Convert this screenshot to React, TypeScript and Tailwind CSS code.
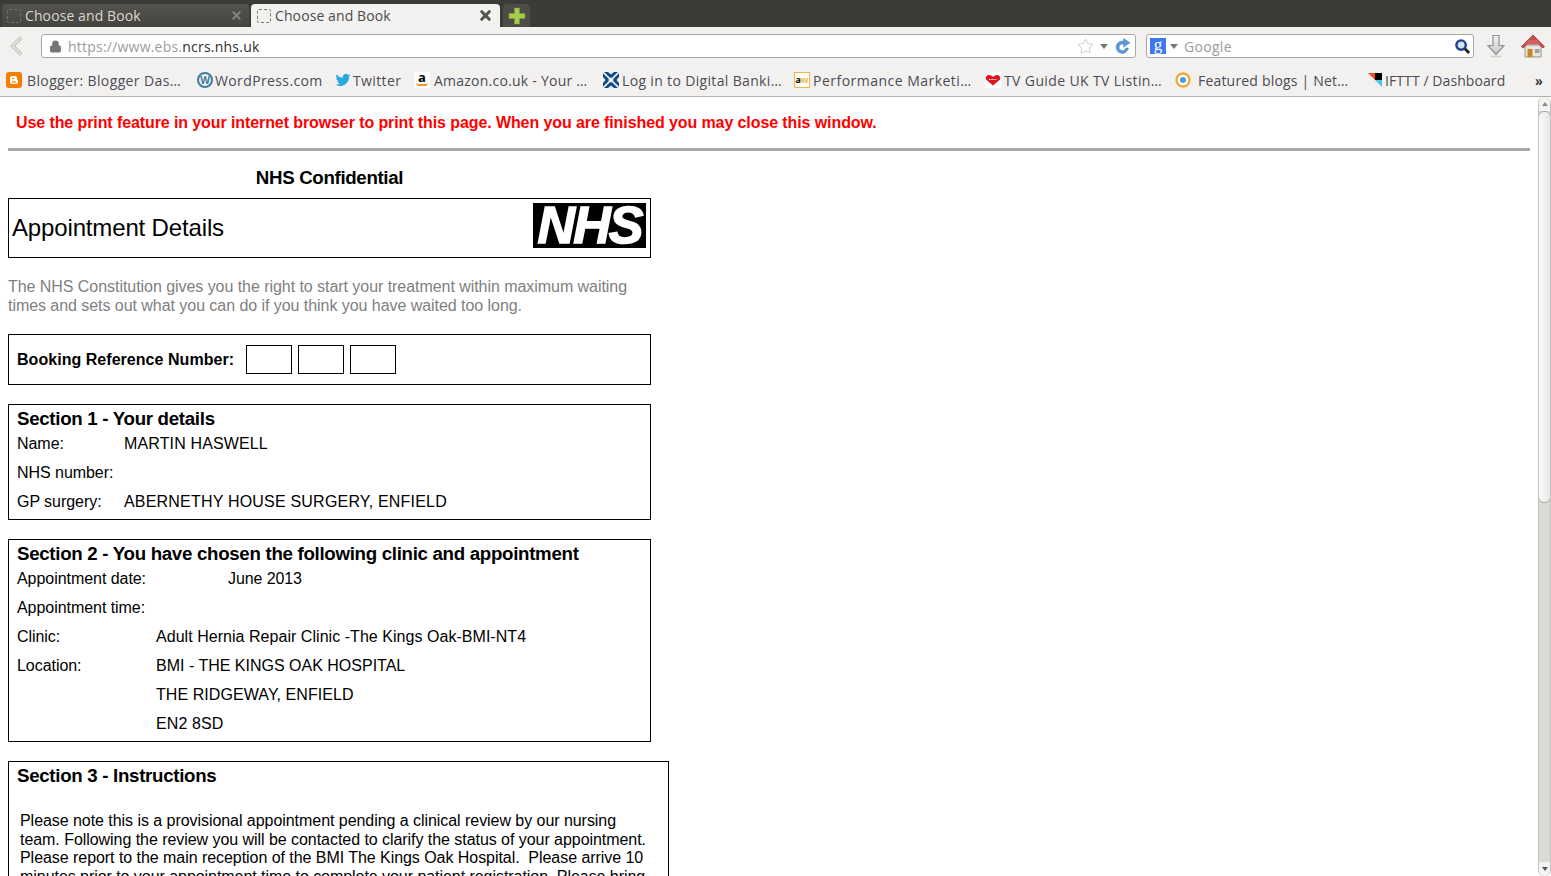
import React from 'react';
import { Lock, Star, X } from 'lucide-react';

const ui = "font-['Open_Sans',sans-serif]";

const Fav = ({ children }: { children: React.ReactNode }) => (
  <span className="w-4 h-4 shrink-0 flex items-center justify-center">{children}</span>
);

const Bookmark = ({ icon, label, w, gap, track = 'tracking-[0.38px]' }: { icon: React.ReactNode; label: string; w: number; gap: string; track?: string }) => (
  <div className="flex items-center shrink-0 overflow-hidden whitespace-nowrap" style={{ width: w }}>
    <Fav>{icon}</Fav>
    <span className={`${gap} ${track} text-[14px] text-[#4c4c54]`}>{label}</span>
  </div>
);

const Dashed = () => <span className="w-[14px] h-[14px] border border-dashed border-[#77766f] rounded-[2px] shrink-0" />;

const Row = ({ label, value, labelW, h = 'h-[29px]', track = '' }: { label: string; value?: string; labelW: string; h?: string; track?: string }) => (
  <div className={`flex items-center ${h}`}>
    <span className={`${labelW} shrink-0 tracking-[-0.05px]`}>{label}</span>
    <span className={track}>{value}</span>
  </div>
);

export default function App() {
  return (
    <div className="h-[876px] w-[1551px] overflow-hidden flex flex-col bg-white">
      {/* tab strip */}
      <div className={`${ui} h-[27px] bg-[#3c3b37] flex items-end pl-[2px] gap-[2px] shrink-0`}>
        <div className="w-[247px] h-[23px] rounded-t-[4px] bg-gradient-to-b from-[#55534e] to-[#45443f] flex items-center pl-[5px] pr-[6px] gap-[4px] text-[14px] tracking-[0.1px] text-[#d8d6d0]">
          <Dashed />
          <span className="flex-1">Choose and Book</span>
          <X className="w-[13px] h-[13px] text-[#85847e]" strokeWidth={3.5} />
        </div>
        <div className="w-[249px] h-[23px] rounded-t-[4px] bg-[#f3f2f0] flex items-center pl-[6px] pr-[7px] gap-[4px] text-[14px] tracking-[0.1px] text-[#4b4b4b]">
          <Dashed />
          <span className="flex-1">Choose and Book</span>
          <X className="w-[15px] h-[15px] text-[#55534f]" strokeWidth={5} />
        </div>
        <div className="ml-px w-[27px] h-[23px] rounded-t-[4px] bg-[#4d4c47] flex items-center justify-center">
          <svg viewBox="0 0 18 18" className="w-[18px] h-[18px]">
            <path d="M6.500 1h5v5.500H17v5h-5.500V17h-5v-5.500H1v-5h5.500z" fill="#a3cf4c" stroke="#7d9c3a" strokeWidth=".6" />
          </svg>
        </div>
      </div>

      {/* nav bar */}
      <div className={`${ui} h-[36px] pt-[2px] bg-[#f2f1f0] flex items-center shrink-0 pl-[9px]`}>
        <svg viewBox="0 0 14 22" className="w-[14px] h-[22px] shrink-0">
          <path d="M11 1.500 13 4 6 11l7 7-2 2.500L1.500 11z" fill="#dcdbd8" stroke="#c4c3c0" strokeWidth="1" />
        </svg>
        <div className="ml-[18px] w-[1095px] h-[24px] bg-white border border-[#a9a8a5] rounded-[3px] flex items-center pl-[7px] pr-[4px]">
          <Lock className="w-[13px] h-[13px] text-[#77767a] fill-[#77767a]" strokeWidth={2} />
          <span className="ml-[6px] text-[14px] tracking-[0.22px]">
            <span className="text-[#9c9c9c]">https://www.ebs.</span>
            <span className="text-[#2e2e2e]">ncrs.nhs.uk</span>
          </span>
          <span className="flex-1" />
          <Star className="w-[17px] h-[17px] text-[#d4d4d4]" strokeWidth={1.5} />
          <span className="ml-[6px] w-0 h-0 border-x-[4px] border-x-transparent border-t-[5px] border-t-[#777]" />
          <svg viewBox="0 0 16 16" className="ml-[6px] w-[17px] h-[17px]">
            <path d="M13.500 9.500A5.800 5.800 0 1 1 9 3V.5L15 4.500 9 8.500V5.800A3.100 3.100 0 1 0 11 9.500z" fill="#5c9bd6" stroke="#3f7fbd" strokeWidth=".5" />
          </svg>
        </div>
        <div className="ml-[10px] w-[328px] h-[24px] bg-white border border-[#a9a8a5] rounded-[3px] flex items-center pl-[3px] pr-[2px]">
          <span className="w-[16px] h-[16px] bg-[#3d78f0] text-white text-[17px] leading-[13px] text-center font-['Liberation_Serif',serif]">g</span>
          <span className="ml-[4px] w-0 h-0 border-x-[4px] border-x-transparent border-t-[5px] border-t-[#777]" />
          <span className="ml-[6px] text-[14px] tracking-[0.3px] text-[#9b9b9b] flex-1">Google</span>
          <svg viewBox="0 0 18 18" className="w-[17px] h-[17px]">
            <circle cx="7.500" cy="7.500" r="5" fill="#d5e3f5" stroke="#1f3f8f" strokeWidth="2.600" />
            <path d="M11.500 11.500 16 16" stroke="#222" strokeWidth="3" />
          </svg>
        </div>
        <svg viewBox="0 0 20 24" className="ml-[12px] w-[20px] h-[24px]">
          <defs>
            <linearGradient id="dl" x1="0" x2="0" y1="0" y2="1">
              <stop offset="0" stopColor="#f4f5f4" />
              <stop offset="1" stopColor="#c3c8c6" />
            </linearGradient>
          </defs>
          <path d="M7 1.500h6v10h5L10 20.500 2 11.500h5z" fill="url(#dl)" stroke="#8f9391" strokeWidth="1.200" />
          <ellipse cx="10" cy="22.500" rx="6" ry="1" fill="#d2d1ce" />
        </svg>
        <svg viewBox="0 0 24 24" className="ml-[15px] w-[24px] h-[24px]">
          <path d="M4 11h16v12H4z" fill="#e9e6df" stroke="#99958c" />
          <path d="M.5 12.500 12 1l11.500 11.500-1.500 1.500L12 5 2 14z" fill="#c9504c" stroke="#9e3a36" strokeWidth=".8" />
          <path d="M8 6h8l4 4.500H4z" fill="#d0605a" />
          <path d="M6.500 15h5v8h-5z" fill="#c8861e" />
          <path d="M14 15h4.500v4H14z" fill="#9aa0a3" />
        </svg>
      </div>

      {/* bookmarks */}
      <div className={`${ui} h-[32px] pt-px bg-[#f2f1f0] border-b border-[#b5b3ae] flex items-center pl-[6px] shrink-0 box-content`}>
        <Bookmark w={191} gap="ml-[5px]" label="Blogger: Blogger Das…" icon={
          <svg viewBox="0 0 16 16" className="w-[16px] h-[16px]">
            <rect width="16" height="16" rx="3" fill="#f57d00" />
            <path d="M6 4h3a2 2 0 0 1 2 2v1a1 1 0 0 0 1 1v2a2 2 0 0 1-2 2H6a2 2 0 0 1-2-2V6a2 2 0 0 1 2-2z" fill="#fff" />
            <path d="M6 6.500h2.500M6 9.800h4" stroke="#f57d00" strokeWidth="1.200" />
          </svg>
        } />
        <Bookmark w={138} gap="ml-[2px]" label="WordPress.com" icon={
          <span className="w-[16px] h-[16px] rounded-full border-[2px] border-[#3f7d9f] text-[#3f7d9f] text-[10px] font-bold leading-[12px] text-center">W</span>
        } />
        <Bookmark w={79} gap="ml-[2px]" label="Twitter" icon={
          <svg viewBox="0 0 24 24" className="w-[16px] h-[16px]"><path fill="#2aa9e0" d="M23 5c-.8.4-1.700.6-2.600.7.900-.6 1.600-1.400 2-2.500-.9.5-1.900.9-2.900 1.100A4.500 4.500 0 0 0 11.800 8.500C8 8.300 4.600 6.500 2.400 3.700c-1.200 2-.6 4.600 1.400 6-.7 0-1.400-.2-2-.6 0 2.200 1.500 4.100 3.600 4.500-.7.200-1.400.200-2 .1.600 1.800 2.300 3.100 4.200 3.100A9.100 9.100 0 0 1 1 18.700 12.900 12.900 0 0 0 21 7.300c.8-.6 1.500-1.400 2-2.300z" /></svg>
        } />
        <Bookmark w={189} gap="ml-[4px]" track="tracking-[0.24px]" label="Amazon.co.uk - Your …" icon={
          <span className="w-[16px] h-[16px] bg-white flex flex-col items-center leading-[10px]">
            <span className="text-[13px] font-bold text-black h-[11px]">a</span>
            <span className="w-[12px] h-[3px] border-b-[2px] border-[#f29a1f] rounded-b-full" />
          </span>
        } />
        <Bookmark w={191} gap="ml-[3px]" track="tracking-[0.34px]" label="Log in to Digital Banki…" icon={
          <svg viewBox="0 0 16 16" className="w-[16px] h-[16px]">
            <rect width="16" height="16" fill="#0f4c8a" />
            <path d="M0 0l16 16M16 0 0 16" stroke="#f2f1f0" strokeWidth="1.600" />
            <path d="M5 0h6l-3 2.500zM5 16h6l-3-2.500zM0 5v6l2.500-3zM16 5v6l-2.500-3z" fill="#f2f1f0" />
            <rect x="6" y="6" width="4" height="4" fill="#f2f1f0" transform="rotate(45 8 8)" />
          </svg>
        } />
        <Bookmark w={191} gap="ml-[3px]" track="tracking-[0.48px]" label="Performance Marketi…" icon={
          <span className="w-[16px] h-[16px] border border-[#f0b840] bg-white text-[9px] font-bold leading-[13px] text-center">
            <span className="text-black">a</span><span className="text-[#f0b840]">w</span>
          </span>
        } />
        <Bookmark w={190} gap="ml-[3px]" label="TV Guide UK TV Listin…" icon={
          <svg viewBox="0 0 16 16" className="w-[16px] h-[16px]">
            <rect width="16" height="16" fill="#fff" />
            <path fill="#e0141e" d="M8 13.500 1 7.500C0 5.500 1.500 3 4 3c2 0 3 1 4 2 1-1 2-2 4-2 2.500 0 4 2.500 3 4.500z" />
            <path d="M4 7.500h8" stroke="#fff" strokeWidth="1" strokeDasharray="1 .6" />
          </svg>
        } />
        <Bookmark w={192} gap="ml-[7px]" track="tracking-[0.19px]" label="Featured blogs | Net…" icon={
          <svg viewBox="0 0 16 16" className="w-[16px] h-[16px]">
            <circle cx="8" cy="8" r="6.500" fill="#fff" stroke="#f2a93b" strokeWidth="2.400" />
            <circle cx="8" cy="8" r="3" fill="#3f9fd8" />
          </svg>
        } />
        <Bookmark w={155} gap="ml-[2px]" track="tracking-[0.08px]" label="IFTTT / Dashboard" icon={
          <svg viewBox="0 0 16 16" className="w-[16px] h-[16px]">
            <path d="M1 1h7v7z" fill="#f2501b" />
            <path d="M8 1h7v7H8z" fill="#000" />
            <path d="M8 8h7v7z" fill="#4ec5ef" />
          </svg>
        } />
        <span className="ml-[13px] text-[14px] font-semibold text-[#222]">»</span>
      </div>

      {/* page + scrollbar */}
      <div className="flex-1 flex min-h-0">
        <div className="flex-1 min-w-0 overflow-hidden pl-[8px] pr-[8px] font-['Liberation_Sans',Arial,sans-serif] text-[16px] leading-[18px] text-black">
          <p className="pl-[8px] pt-[17px] font-bold text-[#ff0000] tracking-[-0.095px]">
            Use the print feature in your internet browser to print this page. When you are finished you may close this window.
          </p>
          <div className="mt-[16px] h-[3px] bg-[#a9a9a9]" />

          <h2 className="mt-[16px] w-[643px] text-center text-[18.7px] leading-[22px] font-bold tracking-[-0.33px]">NHS Confidential</h2>

          <div className="mt-[9px] w-[643px] h-[60px] border border-black flex items-center justify-between pl-[3px] pr-[4px]">
            <span className="text-[24px] leading-[28px] tracking-[-0.15px]">Appointment Details</span>
            <div className="w-[113px] h-[45px] mb-[6px] bg-black flex items-center justify-center">
              <span className="text-white font-bold italic text-[52px] leading-[45px] tracking-[-2px] [-webkit-text-stroke:1.5px_white]">NHS</span>
            </div>
          </div>

          <p className="mt-[19px] w-[643px] text-[#808080] leading-[19px] tracking-[-0.05px]">
            The NHS Constitution gives you the right to start your treatment within maximum waiting times and sets out what you can do if you think you have waited too long.
          </p>

          <div className="mt-[19px] w-[643px] h-[51px] border border-black flex items-center pl-[8px] gap-[6px]">
            <span className="font-bold mr-[6px] tracking-[0.04px]">Booking Reference Number:</span>
            <span className="w-[46px] h-[29px] border border-black" />
            <span className="w-[46px] h-[29px] border border-black" />
            <span className="w-[46px] h-[29px] border border-black" />
          </div>

          <section className="mt-[19px] w-[643px] h-[116px] border border-black pl-[8px]">
            <h3 className="text-[18.7px] leading-[22px] mt-[3px] font-bold tracking-[-0.3px]">Section 1 - Your details</h3>
            <Row label="Name:" value="MARTIN HASWELL" labelW="w-[107px]" h="h-[28px]" track="tracking-[0.14px]" />
            <Row label="NHS number:" labelW="w-[107px]" />
            <Row label="GP surgery:" value="ABERNETHY HOUSE SURGERY, ENFIELD" labelW="w-[107px]" track="tracking-[0.2px]" />
          </section>

          <section className="mt-[19px] w-[643px] h-[203px] border border-black pl-[8px]">
            <h3 className="text-[18.7px] leading-[22px] mt-[3px] font-bold tracking-[-0.3px]">Section 2 - You have chosen the following clinic and appointment</h3>
            <Row label="Appointment date:" value="June 2013" labelW="w-[211px]" h="h-[28px]" track="tracking-[-0.1px]" />
            <Row label="Appointment time:" labelW="w-[211px]" />
            <Row label="Clinic:" value="Adult Hernia Repair Clinic -The Kings Oak-BMI-NT4" labelW="w-[139px]" track="tracking-[0.04px]" />
            <Row label="Location:" value="BMI - THE KINGS OAK HOSPITAL" labelW="w-[139px]" />
            <Row label="" value="THE RIDGEWAY, ENFIELD" labelW="w-[139px]" track="tracking-[0.07px]" />
            <Row label="" value="EN2 8SD" labelW="w-[139px]" track="tracking-[0.1px]" />
          </section>

          <section className="mt-[19px] w-[661px] border border-black pl-[8px] pb-[20px]">
            <h3 className="text-[18.7px] leading-[22px] mt-[3px] font-bold tracking-[-0.3px]">Section 3 - Instructions</h3>
            <p className="mt-[25px] pl-[3px] pr-[8px] leading-[18.700px] tracking-[-0.05px]">
              Please note this is a provisional appointment pending a clinical review by our nursing team. Following the review you will be contacted to clarify the status of your appointment. Please report to the main reception of the BMI The Kings Oak Hospital.&nbsp; Please arrive 10 minutes prior to your appointment time to complete your patient registration. Please bring
            </p>
          </section>
        </div>

        {/* scrollbar */}
        <div className="w-[13px] shrink-0 flex flex-col bg-[#dcdad7] border-x border-[#c4c2be] rounded-[6px] overflow-hidden">
          <div className="h-[14px] bg-[#f5f4f2] flex items-center justify-center shrink-0">
            <span className="w-0 h-0 border-x-[3px] border-x-transparent border-b-[4px] border-b-[#8a8a8a]" />
          </div>
          <div className="h-[392px] bg-gradient-to-r from-[#fafafa] to-[#e8e7e5] border border-[#aaa8a4] rounded-[6px] -mx-px shrink-0" />
          <div className="flex-1" />
          <div className="h-[14px] bg-[#f5f4f2] flex items-center justify-center shrink-0 rounded-b-[6px]">
            <span className="w-0 h-0 border-x-[3px] border-x-transparent border-t-[4px] border-t-[#555]" />
          </div>
        </div>
      </div>
    </div>
  );
}
